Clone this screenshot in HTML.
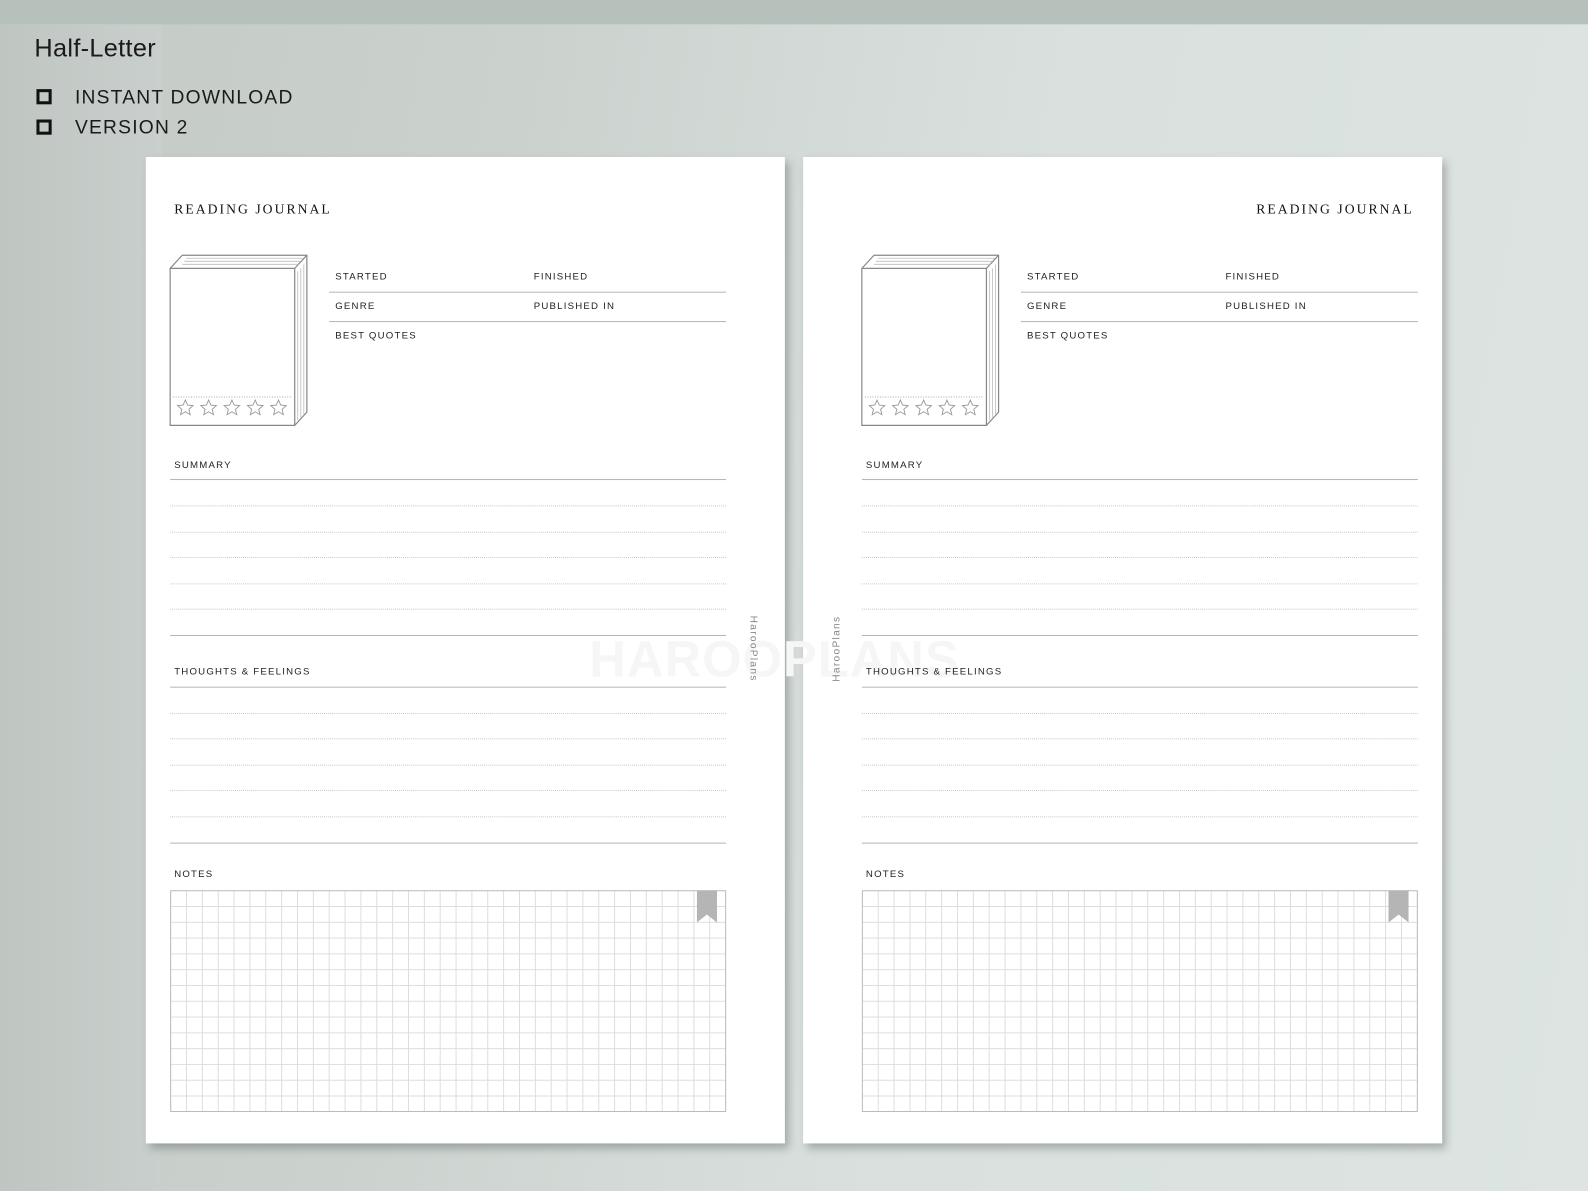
<!DOCTYPE html>
<html><head><meta charset="utf-8"><style>
*{margin:0;padding:0;box-sizing:border-box}
html,body{width:1588px;height:1191px;overflow:hidden}
body{background:linear-gradient(100deg,#c3c9c5 0%,#cbd2ce 30%,#d9e0de 60%,#dde4e2 100%);font-family:"Liberation Sans",sans-serif;position:relative}
#w{position:absolute;left:0;top:0;width:1568px;height:1176px;transform:scale(1.01276);transform-origin:0 0}
.topbar{position:absolute;left:0;top:0;width:1568px;height:24px;background:#b7c1bc}
.lside{position:absolute;left:0;top:24px;width:160px;height:1152px;background:linear-gradient(90deg,#bfc6c2,#c9cfcc)}
.h1{position:absolute;left:34px;top:34px;font-size:25px;color:#1a1a1a;letter-spacing:.3px}
.chk{position:absolute;left:36px;width:15px;height:15px;border:3px solid #111}
.ct{position:absolute;left:74px;font-size:19px;letter-spacing:1.2px;color:#1a1a1a}
.page{position:absolute;top:155px;width:631px;height:974px;background:#fff;box-shadow:4px 5px 8px rgba(60,70,65,.35)}
.t{position:absolute;font-size:9.5px;letter-spacing:1.2px;color:#222}
.title{position:absolute;top:199px;font-family:"Liberation Serif",serif;font-size:13.5px;letter-spacing:2px;color:#111;white-space:nowrap}
.hl{position:absolute;height:0;border-top:1.5px solid #b5b5b5}
.dl{position:absolute;height:0;border-top:1px dotted #c8c8c8}
.grid{position:absolute;top:879px;width:549px;height:219px;border:1.5px solid #bbb;
background-image:linear-gradient(90deg,#ddd 1px,transparent 1px),linear-gradient(#ddd 1px,transparent 1px);background-size:15.66px 15.6px;background-position:-1px -1px}
.bm{position:absolute;top:879px;width:20px;height:32px;background:#b5b5b5;clip-path:polygon(0 0,100% 0,100% 100%,50% 75%,0 100%)}
.vt{position:absolute;font-size:10px;letter-spacing:1.3px;color:#888;white-space:nowrap}
.wm{position:absolute;left:582px;top:622px;font-size:50px;font-weight:bold;color:#f6f6f6;letter-spacing:1px;white-space:nowrap}
</style></head><body><div id="w">
<div class="topbar"></div><div class="lside"></div>
<div class="h1">Half-Letter</div>
<div class="chk" style="top:88px"></div><div class="ct" style="top:86px">INSTANT DOWNLOAD</div>
<div class="chk" style="top:118px"></div><div class="ct" style="top:116px">VERSION 2</div>

<div class="page" style="left:144px"></div>
<div class="page" style="left:793px"></div>
<div class="wm">HAROOPLANS</div>

<!-- LEFT PAGE -->
<div id="L">
<div class="title" style="left:172px">READING JOURNAL</div>
<svg style="position:absolute;left:166px;top:249px" width="140" height="175" viewBox="0 0 140 175" fill="none" stroke="#888" stroke-width="1.2">
<path d="M2 16 L14 3 L137 3 L137 158 L125 171 L2 171 Z"/><path d="M2 16 L125 16 L125 171 M125 16 L137 3"/>
<path d="M18 6 L133 6 M16 9 L131 9 M14 12 L129 12" stroke="#bbb" stroke-width=".8"/>
<path d="M128 19 L128 166 M131 16 L131 163 M134 12 L134 160" stroke="#bbb" stroke-width=".8"/>
<path d="M5 143 L122 143" stroke="#bbb" stroke-dasharray="1 1.5"/>
<g stroke="#999" stroke-width=".9"><path id="s" d="M17 146 l2.2 5 5.5 .5 -4.2 3.6 1.3 5.4 -4.8 -2.9 -4.8 2.9 1.3 -5.4 -4.2 -3.6 5.5 -.5z"/>
<use href="#s" x="23"/><use href="#s" x="46"/><use href="#s" x="69"/><use href="#s" x="92"/></g></svg>
<div class="t" style="left:331px;top:268px">STARTED</div><div class="t" style="left:527px;top:268px">FINISHED</div>
<div class="hl" style="left:325px;top:288px;width:392px"></div>
<div class="t" style="left:331px;top:297px">GENRE</div><div class="t" style="left:527px;top:297px">PUBLISHED IN</div>
<div class="hl" style="left:325px;top:317px;width:392px"></div>
<div class="t" style="left:331px;top:326px">BEST QUOTES</div>
<div class="t" style="left:172px;top:454px">SUMMARY</div>
<div class="hl" style="left:168px;top:473px;width:549px"></div>
<div class="dl" style="left:168px;top:499px;width:549px"></div><div class="dl" style="left:168px;top:525px;width:549px"></div><div class="dl" style="left:168px;top:550px;width:549px"></div><div class="dl" style="left:168px;top:576px;width:549px"></div><div class="dl" style="left:168px;top:601px;width:549px"></div>
<div class="hl" style="left:168px;top:627px;width:549px"></div>
<div class="t" style="left:172px;top:658px">THOUGHTS &amp; FEELINGS</div>
<div class="hl" style="left:168px;top:678px;width:549px"></div>
<div class="dl" style="left:168px;top:704px;width:549px"></div><div class="dl" style="left:168px;top:729px;width:549px"></div><div class="dl" style="left:168px;top:755px;width:549px"></div><div class="dl" style="left:168px;top:780px;width:549px"></div><div class="dl" style="left:168px;top:806px;width:549px"></div>
<div class="hl" style="left:168px;top:832px;width:549px"></div>
<div class="t" style="left:172px;top:858px">NOTES</div>
<div class="grid" style="left:168px"></div>
<div class="bm" style="left:688px"></div>
<div class="vt" style="left:711px;top:635px;transform:rotate(90deg)">HarooPlans</div>
</div>

<!-- RIGHT PAGE -->
<div id="R" style="position:absolute;left:683px;top:0;width:800px;height:1176px">
<div class="title" style="right:87px">READING JOURNAL</div>
<svg style="position:absolute;left:166px;top:249px" width="140" height="175" viewBox="0 0 140 175" fill="none" stroke="#888" stroke-width="1.2">
<path d="M2 16 L14 3 L137 3 L137 158 L125 171 L2 171 Z"/><path d="M2 16 L125 16 L125 171 M125 16 L137 3"/>
<path d="M18 6 L133 6 M16 9 L131 9 M14 12 L129 12" stroke="#bbb" stroke-width=".8"/>
<path d="M128 19 L128 166 M131 16 L131 163 M134 12 L134 160" stroke="#bbb" stroke-width=".8"/>
<path d="M5 143 L122 143" stroke="#bbb" stroke-dasharray="1 1.5"/>
<g stroke="#999" stroke-width=".9"><path d="M17 146 l2.2 5 5.5 .5 -4.2 3.6 1.3 5.4 -4.8 -2.9 -4.8 2.9 1.3 -5.4 -4.2 -3.6 5.5 -.5z"/>
<path transform="translate(23 0)" d="M17 146 l2.2 5 5.5 .5 -4.2 3.6 1.3 5.4 -4.8 -2.9 -4.8 2.9 1.3 -5.4 -4.2 -3.6 5.5 -.5z"/>
<path transform="translate(46 0)" d="M17 146 l2.2 5 5.5 .5 -4.2 3.6 1.3 5.4 -4.8 -2.9 -4.8 2.9 1.3 -5.4 -4.2 -3.6 5.5 -.5z"/>
<path transform="translate(69 0)" d="M17 146 l2.2 5 5.5 .5 -4.2 3.6 1.3 5.4 -4.8 -2.9 -4.8 2.9 1.3 -5.4 -4.2 -3.6 5.5 -.5z"/>
<path transform="translate(92 0)" d="M17 146 l2.2 5 5.5 .5 -4.2 3.6 1.3 5.4 -4.8 -2.9 -4.8 2.9 1.3 -5.4 -4.2 -3.6 5.5 -.5z"/></g></svg>
<div class="t" style="left:331px;top:268px">STARTED</div><div class="t" style="left:527px;top:268px">FINISHED</div>
<div class="hl" style="left:325px;top:288px;width:392px"></div>
<div class="t" style="left:331px;top:297px">GENRE</div><div class="t" style="left:527px;top:297px">PUBLISHED IN</div>
<div class="hl" style="left:325px;top:317px;width:392px"></div>
<div class="t" style="left:331px;top:326px">BEST QUOTES</div>
<div class="t" style="left:172px;top:454px">SUMMARY</div>
<div class="hl" style="left:168px;top:473px;width:549px"></div>
<div class="dl" style="left:168px;top:499px;width:549px"></div><div class="dl" style="left:168px;top:525px;width:549px"></div><div class="dl" style="left:168px;top:550px;width:549px"></div><div class="dl" style="left:168px;top:576px;width:549px"></div><div class="dl" style="left:168px;top:601px;width:549px"></div>
<div class="hl" style="left:168px;top:627px;width:549px"></div>
<div class="t" style="left:172px;top:658px">THOUGHTS &amp; FEELINGS</div>
<div class="hl" style="left:168px;top:678px;width:549px"></div>
<div class="dl" style="left:168px;top:704px;width:549px"></div><div class="dl" style="left:168px;top:729px;width:549px"></div><div class="dl" style="left:168px;top:755px;width:549px"></div><div class="dl" style="left:168px;top:780px;width:549px"></div><div class="dl" style="left:168px;top:806px;width:549px"></div>
<div class="hl" style="left:168px;top:832px;width:549px"></div>
<div class="t" style="left:172px;top:858px">NOTES</div>
<div class="grid" style="left:168px"></div>
<div class="bm" style="left:688px"></div>
<div class="vt" style="left:111px;top:635px;transform:rotate(-90deg)">HarooPlans</div>
</div>
</div></body></html>
